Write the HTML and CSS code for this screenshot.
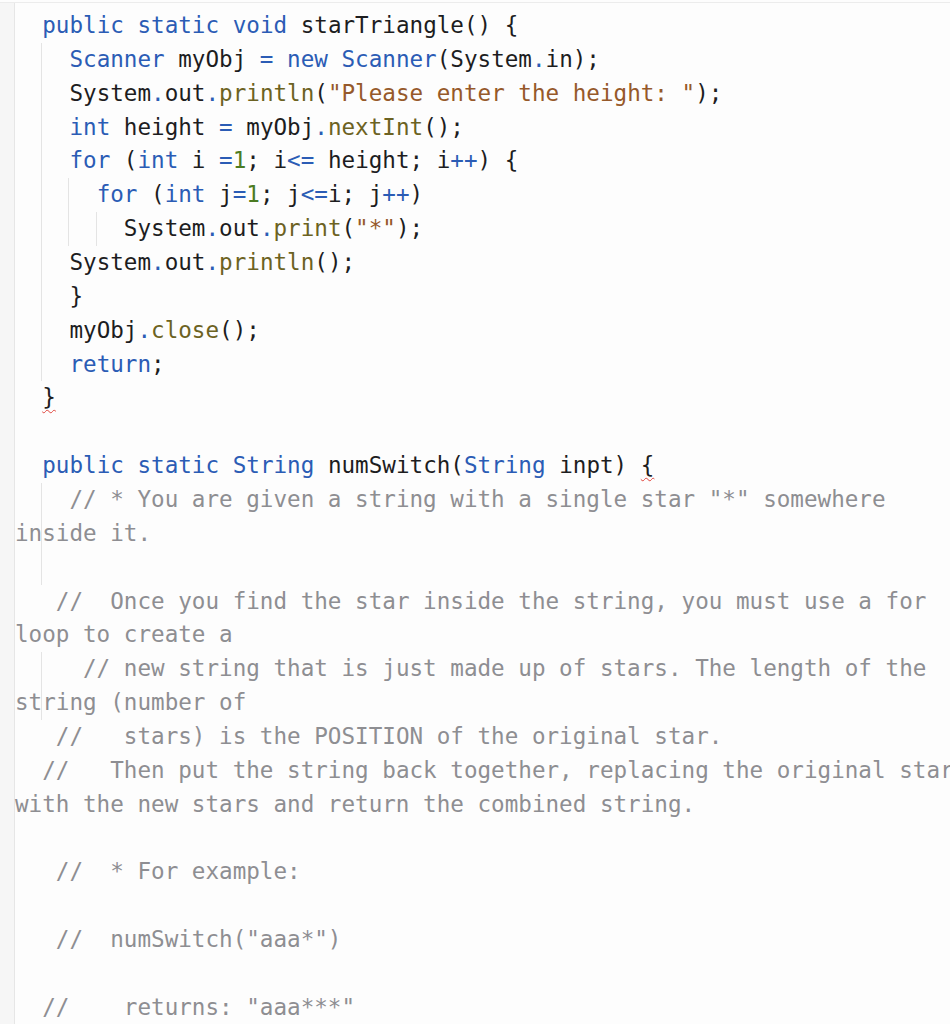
FILE: index.html
```html
<!DOCTYPE html>
<html lang="en">
<head>
<meta charset="utf-8">
<title>numSwitch</title>
<link rel="stylesheet" href="styles.css">
</head>
<body>
<div class="editor">
  <div class="gutter"></div>
  <div class="code">
    <div class="ln">  <span class="k">public</span> <span class="k">static</span> <span class="k">void</span> starTriangle() {</div>
    <div class="ln ga">    <span class="k">Scanner</span> myObj <span class="o">=</span> <span class="k">new</span> <span class="k">Scanner</span>(System<span class="o">.</span>in);</div>
    <div class="ln ga">    System<span class="o">.</span>out<span class="o">.</span><span class="m">println</span>(<span class="s">"Please enter the height: "</span>);</div>
    <div class="ln ga">    <span class="k">int</span> height <span class="o">=</span> myObj<span class="o">.</span><span class="m">nextInt</span>();</div>
    <div class="ln ga">    <span class="k">for</span> (<span class="k">int</span> i <span class="o">=</span><span class="n">1</span>; i<span class="o">&lt;=</span> height; i<span class="o">++</span>) {</div>
    <div class="ln gb">      <span class="k">for</span> (<span class="k">int</span> j<span class="o">=</span><span class="n">1</span>; j<span class="o">&lt;=</span>i; j<span class="o">++</span>)</div>
    <div class="ln gc">        System<span class="o">.</span>out<span class="o">.</span><span class="m">print</span>(<span class="s">"*"</span>);</div>
    <div class="ln ga">    System<span class="o">.</span>out<span class="o">.</span><span class="m">println</span>();</div>
    <div class="ln ga">    }</div>
    <div class="ln ga">    myObj<span class="o">.</span><span class="m">close</span>();</div>
    <div class="ln ga">    <span class="k">return</span>;</div>
    <div class="ln">  <span class="err">}</span></div>
    <div class="ln"> </div>
    <div class="ln">  <span class="k">public</span> <span class="k">static</span> <span class="k">String</span> numSwitch(<span class="k">String</span> inpt) <span class="err">{</span></div>
    <div class="ln ga c">    // * You are given a string with a single star "*" somewhere inside it.</div>
    <div class="ln ga"> </div>
    <div class="ln c">   //  Once you find the star inside the string, you must use a for loop to create a</div>
    <div class="ln ga c">     // new string that is just made up of stars. The length of the string (number of</div>
    <div class="ln c">   //   stars) is the POSITION of the original star.</div>
    <div class="ln c">  //   Then put the string back together, replacing the original star with the new stars and return the combined string.</div>
    <div class="ln"> </div>
    <div class="ln c">   //  * For example:</div>
    <div class="ln"> </div>
    <div class="ln c">   //  numSwitch("aaa*")</div>
    <div class="ln"> </div>
    <div class="ln c">  //    returns: "aaa***"</div>
  </div>
</div>
</body>
</html>
```
FILE: styles.css
```css
html, body {
  margin: 0;
  padding: 0;
  overflow: hidden;
  background: #fdfdfd;
}

.editor {
  display: flex;
  margin-top: 2px;
  border-top: 1px solid #ececec;
  min-height: 1030px;
}

.gutter {
  width: 14px;
  flex: none;
  background: #f6f6f6;
}

.code {
  flex: none;
  width: 70ch;
  padding-top: 6px;
  border-left: 1px solid #e6e6e6;
  background: #fdfdfd;
  font-family: "DejaVu Sans Mono", "Liberation Mono", monospace;
  font-size: 22.6px;
  line-height: 33.86px;
  color: #1d1d1f;
}

.ln {
  white-space: pre-wrap;
  min-height: 33.86px;
  background-repeat: no-repeat;
}

.ga {
  background-image: linear-gradient(#e4e4e4, #e4e4e4);
  background-size: 1px 100%;
  background-position: calc(2ch - 1px) 0;
}

.gb {
  background-image: linear-gradient(#e4e4e4, #e4e4e4), linear-gradient(#e4e4e4, #e4e4e4);
  background-size: 1px 100%, 1px 100%;
  background-position: calc(2ch - 1px) 0, calc(4ch - 1px) 0;
}

.gc {
  background-image: linear-gradient(#e4e4e4, #e4e4e4), linear-gradient(#e4e4e4, #e4e4e4), linear-gradient(#e4e4e4, #e4e4e4);
  background-size: 1px 100%, 1px 100%, 1px 100%;
  background-position: calc(2ch - 1px) 0, calc(4ch - 1px) 0, calc(6ch - 1px) 0;
}

.k { color: #2b5cb5; }
.o { color: #2b5cb5; }
.m { color: #6c6222; }
.s { color: #96592a; }
.n { color: #4b7b22; }
.c { color: #8e8e92; }

.err {
  text-decoration: underline wavy #e0453d;
  text-decoration-thickness: 1px;
  text-underline-offset: 4px;
}
```
